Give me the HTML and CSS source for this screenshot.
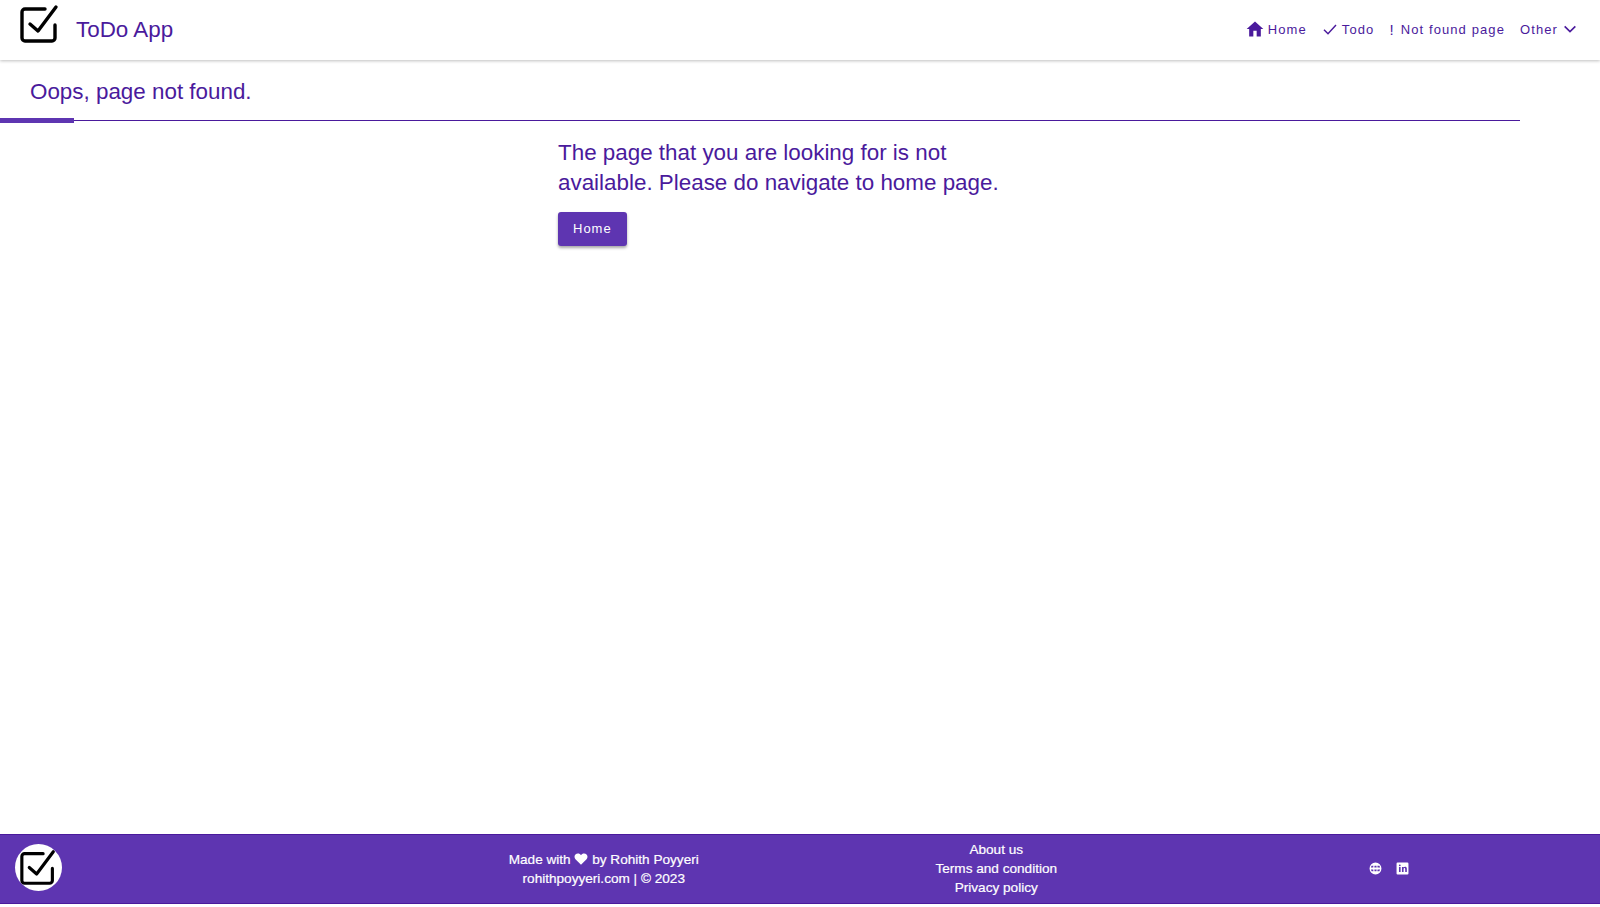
FILE: index.html
```html
<!DOCTYPE html>
<html lang="en">
<head>
    <meta charset="UTF-8">
    <meta name="viewport" content="width=device-width, initial-scale=1.0">
    <title>ToDo App</title>
    <link rel="stylesheet" href="styles.css">
</head>
<body>

<header class="navbar">
    <a class="brand" href="#">
        <svg class="brand-logo" viewBox="0 0 40 40" fill="none" stroke="#000" stroke-width="3.4" stroke-linecap="round" stroke-linejoin="round">
            <path d="M25 5H5a3 3 0 0 0-3 3v26a3 3 0 0 0 3 3h27a3 3 0 0 0 3-3V21"/>
            <path d="M10 20l8 7L36 3"/>
        </svg>
        <span>ToDo App</span>
    </a>
    <nav class="nav-links">
        <a href="#">
            <svg class="home-icon" viewBox="0 0 24 24"><path d="M10 21v-7h4v7h5v-9h3L12 3 2 12h3v9z"/></svg>
            Home
        </a>
        <a href="#">
            <svg class="nav-icon" viewBox="0 0 24 24"><path d="M3 13l6 6L21 6" fill="none" stroke="#4a1a9c" stroke-width="2.200"/></svg>
            Todo
        </a>
        <a href="#"><span class="bang">!</span>Not found page</a>
        <a href="#">
            Other
            <svg class="nav-icon" viewBox="0 0 24 24"><path d="M4 8l8 8 8-8" fill="none" stroke="#4a1a9c" stroke-width="2.400"/></svg>
        </a>
    </nav>
</header>

<main class="page">
    <div class="page-title">
        <h1>Oops, page not found.</h1>
    </div>
    <section class="message">
        <p>The page that you are looking for is not available. Please do navigate to home page.</p>
        <button class="home-btn">Home</button>
    </section>
</main>

<footer class="footer">
    <div class="footer-logo">
        <span class="logo-circle">
            <svg viewBox="0 0 40 40" fill="none" stroke="#000" stroke-width="3.400" stroke-linecap="round" stroke-linejoin="round">
                <path d="M25 5H5a3 3 0 0 0-3 3v26a3 3 0 0 0 3 3h27a3 3 0 0 0 3-3V21"/>
                <path d="M10 20l8 7L36 3"/>
            </svg>
        </span>
    </div>
    <div class="footer-col">
        <div>Made with
            <svg class="heart" viewBox="0 0 24 24"><path d="M12 22L2.500 12.500C-1 8.500 1.500 2.500 6.800 2.500c2.200 0 4 1 5.200 3 1.200-2 3-3 5.200-3 5.300 0 7.800 6 4.300 10z"/></svg>
            by Rohith Poyyeri</div>
        <div>rohithpoyyeri.com | © 2023</div>
    </div>
    <div class="footer-col">
        <a href="#">About us</a>
        <a href="#">Terms and condition</a>
        <a href="#">Privacy policy</a>
    </div>
    <div class="footer-social">
        <a href="#">
            <svg viewBox="0 0 24 24"><path d="M12 1a11 11 0 1 0 0 22 11 11 0 0 0 0-22zM3.500 10c.3-1 .8-2 1.400-3h3.300c-.2 1-.3 2-.4 3zm6.400 0c.1-1 .2-2 .4-3h3.400c.2 1 .3 2 .4 3zm5.900 0c-.1-1-.2-2-.4-3h3.700c.6 1 1.100 2 1.400 3zM3.500 14h4.300c.1 1 .2 2 .4 3H4.900c-.6-1-1.100-2-1.400-3zm6.400 0h4.200c-.1 1-.2 2-.4 3h-3.400c-.2-1-.3-2-.4-3zm5.900 0h4.700c-.3 1-.8 2-1.400 3h-3.700c.2-1 .3-2 .4-3z" fill-rule="evenodd"/></svg>
        </a>
        <a href="#">
            <svg viewBox="0 0 24 24"><path d="M3 1h18a2 2 0 0 1 2 2v18a2 2 0 0 1-2 2H3a2 2 0 0 1-2-2V3a2 2 0 0 1 2-2zm2.500 8v9.500h3V9zM7 4.500A1.700 1.700 0 1 0 7 7.900a1.700 1.700 0 0 0 0-3.400zM11 9v9.500h3v-5c0-3 3-3 3 0v5h3v-6c0-4.500-4.700-4.500-6-2.200V9z" fill-rule="evenodd"/></svg>
        </a>
    </div>
</footer>

</body>
</html>
```

FILE: styles.css
```css
* {
    box-sizing: border-box;
}
html, body {
    height: 100%;
}
body {
    margin: 0;
    display: flex;
    flex-direction: column;
    height: 907px;
    padding-bottom: 3px;
    font-family: 'Liberation Sans', Arial, sans-serif;
    color: #4a1a9c;
    background: #fff;
}
a {
    color: inherit;
    text-decoration: none;
}

/* header */
.navbar {
    display: flex;
    justify-content: space-between;
    align-items: center;
    height: 60px;
    padding: 0 22px 0 20px;
    background: #fff;
    box-shadow: 0 1px 3px rgba(0, 0, 0, 0.25);
}
.brand {
    display: flex;
    align-items: center;
    gap: 16px;
    font-size: 22.4px;
}
.brand-logo {
    width: 40px;
    height: 40px;
    margin-top: -12px;
}
.nav-links {
    display: flex;
    gap: 15px;
    margin-bottom: 2px;
    font-size: 13px;
    letter-spacing: 1.1px;
}
.nav-links a {
    display: flex;
    align-items: center;
    gap: 4px;
}
.nav-icon {
    width: 16px;
    height: 16px;
}
.home-icon {
    width: 20px;
    height: 20px;
    margin-right: -1px;
    fill: #4a1a9c;
}
.bang {
    font-size: 15px;
    margin-right: 2px;
}

/* page content */
.page {
    flex: 1;
}
.page-title {
    position: relative;
    width: 1520px;
    height: 61px;
    padding-left: 30px;
    border-bottom: 1px solid #4a1a9c;
}
.page-title::after {
    content: "";
    position: absolute;
    left: 0;
    bottom: -3px;
    width: 74px;
    height: 5px;
    background: #5e35b1;
}
.page-title h1 {
    margin: 0;
    padding-top: 19px;
    font-size: 22.4px;
    line-height: 26px;
    font-weight: 400;
}
.message {
    width: 450px;
    margin: 17px 0 0 558px;
}
.message p {
    margin: 0 0 14px;
    font-size: 22.4px;
    line-height: 30px;
}
.home-btn {
    height: 34px;
    padding: 0 15px 2px;
    border: none;
    border-radius: 3px;
    font-family: inherit;
    font-size: 13px;
    letter-spacing: 1px;
    color: #fff;
    background: #5e35b1;
    box-shadow: 0 2px 3px rgba(0, 0, 0, 0.35);
}

/* footer */
.footer {
    display: grid;
    grid-template-columns: repeat(4, 1fr);
    align-items: center;
    height: 70px;
    padding: 0 15px;
    font-size: 13.6px;
    line-height: 18.7px;
    color: #fff;
    -webkit-text-stroke: 0.2px #fff;
    background: #5e35b1;
    border-top: 1px solid #4a1a9c;
    border-bottom: 1px solid #4a1a9c;
}
.logo-circle {
    display: flex;
    align-items: center;
    justify-content: center;
    width: 47px;
    height: 47px;
    margin-top: -3px;
    border-radius: 50%;
    background: #fff;
}
.logo-circle svg {
    width: 37px;
    height: 37px;
}
.footer-col {
    display: flex;
    flex-direction: column;
    align-items: center;
    margin-top: 1px;
    text-align: center;
}
.heart {
    width: 14px;
    height: 14px;
    fill: #fff;
    vertical-align: -2px;
}
.footer-social {
    display: flex;
    justify-content: center;
    gap: 14px;
    margin-top: -1px;
}
.footer-social a {
    display: flex;
}
.footer-social svg {
    width: 13px;
    height: 13px;
    fill: #fff;
}
```
